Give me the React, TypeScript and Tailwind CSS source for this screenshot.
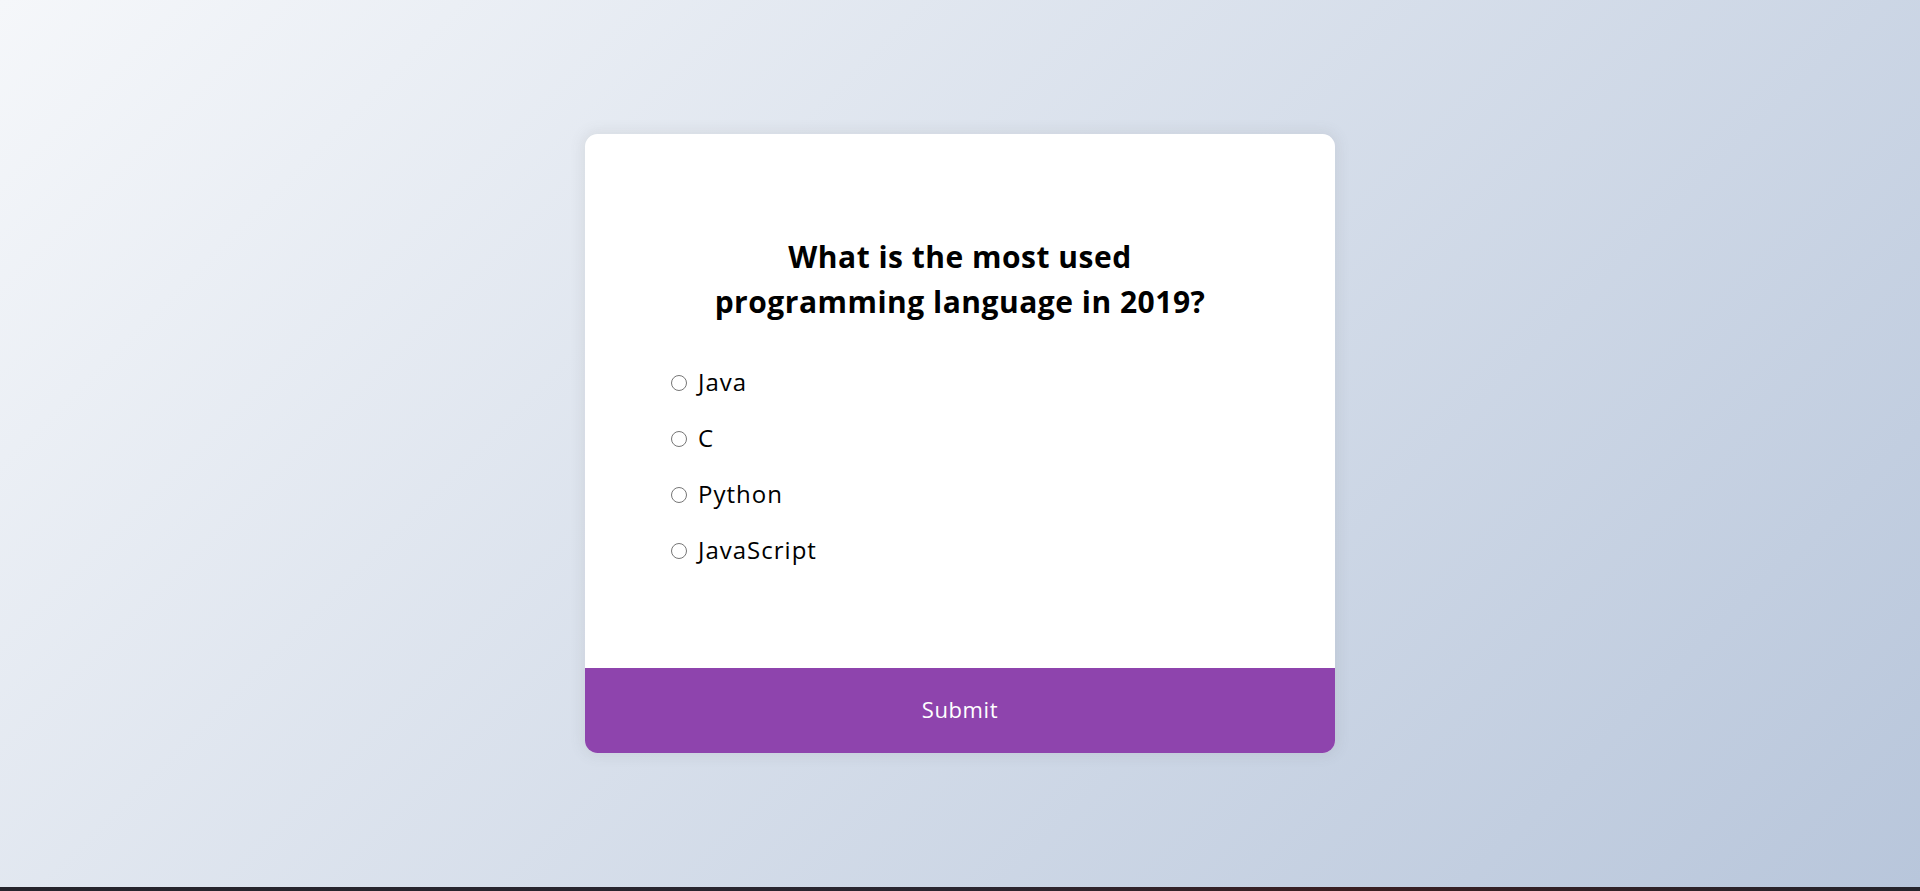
import { useState } from 'react'

const answers = [
  { id: 'a', label: 'Java' },
  { id: 'b', label: 'C' },
  { id: 'c', label: 'Python' },
  { id: 'd', label: 'JavaScript' },
]

export default function App() {
  const [selected, setSelected] = useState<string | null>(null)

  return (
    <div className="flex flex-col h-[891px] overflow-hidden font-['Open_Sans',sans-serif]">
      <div className="flex-1 flex items-center justify-center bg-[linear-gradient(315deg,#b8c6db_0%,#f5f7fa_100%)]">
        <div className="w-[750px] bg-white rounded-[12.5px] overflow-hidden shadow-[0_0_12.5px_2.5px_rgba(100,100,100,0.1)]">
          {/* Question */}
          <div className="p-[80px]">
            <h2 className="p-[20px] text-center text-[30px] leading-[45px] font-bold text-black tracking-[0.5px]">
              What is the most used
              <br />
              programming language in 2019?
            </h2>
            <ul className="my-[20px] flex flex-col gap-[20px]">
              {answers.map(a => (
                <li key={a.id} className="text-[24px] leading-[36px] text-black">
                  <label className="flex items-center cursor-pointer" onClick={() => setSelected(a.id)}>
                    <span className="ml-[6px] mr-[11px] mt-[2px] w-[16px] h-[16px] rounded-full border border-[#767676] bg-white flex items-center justify-center shrink-0">
                      {selected === a.id && <span className="w-[9px] h-[9px] rounded-full bg-[#0075ff]" />}
                    </span>
                    <span className="tracking-[1px]">{a.label}</span>
                  </label>
                </li>
              ))}
            </ul>
          </div>

          {/* Submit */}
          <button className="block w-full bg-[#8e44ad] text-white text-[22px] leading-[33px] pt-[25px] pb-[27px] tracking-[0.6px] cursor-pointer">
            Submit
          </button>
        </div>
      </div>
      <div className="h-[4px] bg-[linear-gradient(90deg,#25242c_0%,#2a2630_50%,#3a1f22_70%,#25242c_100%)]" />
    </div>
  )
}
